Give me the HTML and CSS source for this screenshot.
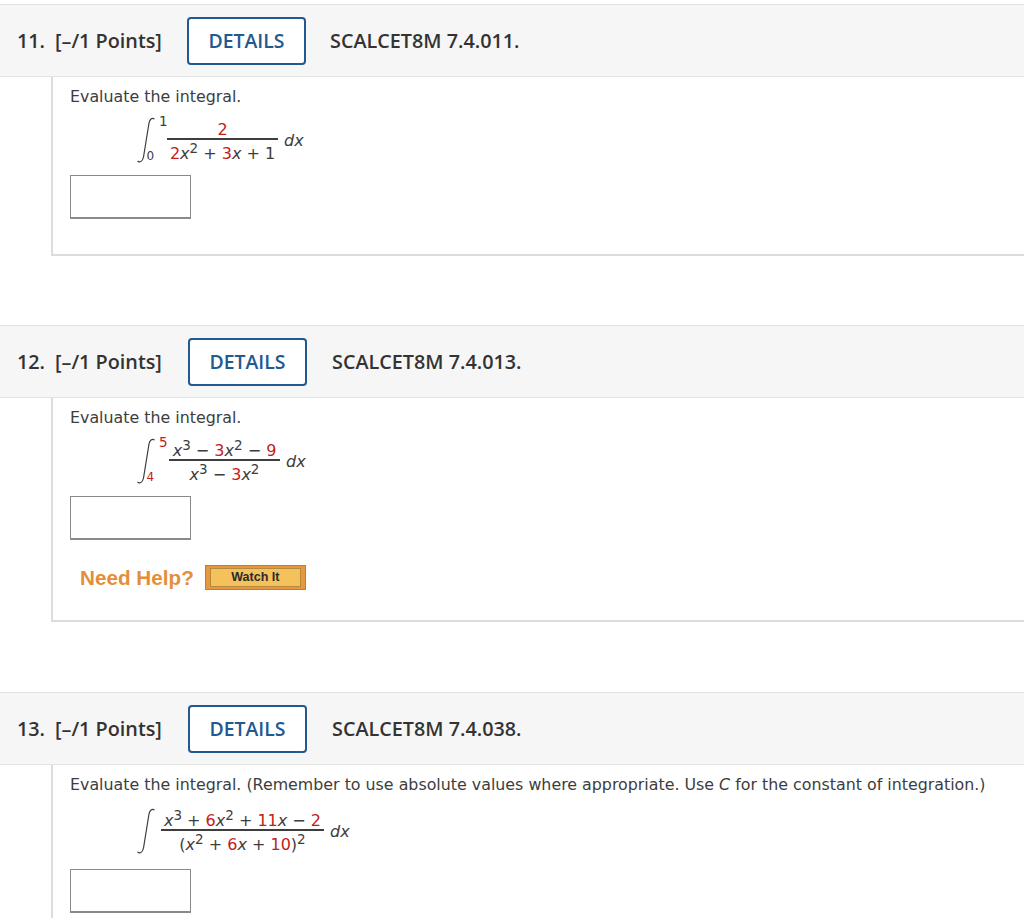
FILE: index.html
```html
<!DOCTYPE html>
<html lang="en">
<head>
  <meta charset="UTF-8" />
  <title>Assignment</title>
  <link rel="stylesheet" href="styles.css">
</head>
<body>

  <!-- Question 11 -->
  <div class="question q11">
    <div class="q-head">
      <span class="q-num">11.</span>
      <span class="q-points">[–/1 Points]</span>
      <button class="details">DETAILS</button>
      <span class="q-code">SCALCET8M 7.4.011.</span>
    </div>
    <div class="q-body">
      <p class="prompt">Evaluate the integral.</p>
      <div class="math">
        <svg class="int" width="18" height="46" viewBox="0 0 18 46"><path d="M.5 44c2 1.500 5 1 6-4L12 6c.7-4 3-5.500 5.500-4" /></svg>
        <div class="limits"><span class="upper">1</span><span>0</span></div>
        <div class="frac">
          <div class="num"><b>2</b></div>
          <div class="den"><b>2</b><i>x</i><sup>2</sup> + <b>3</b><i>x</i> + 1</div>
        </div>
        <i class="dx">dx</i>
      </div>
      <input class="answer" type="text" />
    </div>
  </div>

  <!-- Question 12 -->
  <div class="question q12">
    <div class="q-head">
      <span class="q-num">12.</span>
      <span class="q-points">[–/1 Points]</span>
      <button class="details">DETAILS</button>
      <span class="q-code">SCALCET8M 7.4.013.</span>
    </div>
    <div class="q-body">
      <p class="prompt">Evaluate the integral.</p>
      <div class="math">
        <svg class="int" width="18" height="46" viewBox="0 0 18 46"><path d="M.5 44c2 1.500 5 1 6-4L12 6c.7-4 3-5.500 5.500-4" /></svg>
        <div class="limits red"><span class="upper">5</span><span>4</span></div>
        <div class="frac">
          <div class="num"><i>x</i><sup>3</sup> − <b>3</b><i>x</i><sup>2</sup> − <b>9</b></div>
          <div class="den"><i>x</i><sup>3</sup> − <b>3</b><i>x</i><sup>2</sup></div>
        </div>
        <i class="dx">dx</i>
      </div>
      <input class="answer" type="text" />
      <div class="help">
        <span class="need">Need Help?</span>
        <span class="watch"><span>Watch It</span></span>
      </div>
    </div>
  </div>

  <!-- Question 13 -->
  <div class="question q13">
    <div class="q-head">
      <span class="q-num">13.</span>
      <span class="q-points">[–/1 Points]</span>
      <button class="details">DETAILS</button>
      <span class="q-code">SCALCET8M 7.4.038.</span>
    </div>
    <div class="q-body">
      <p class="prompt">Evaluate the integral. (Remember to use absolute values where appropriate. Use <i>C</i> for the constant of integration.)</p>
      <div class="math">
        <svg class="int" width="18" height="46" viewBox="0 0 18 46"><path d="M.5 44c2 1.500 5 1 6-4L12 6c.7-4 3-5.500 5.500-4" /></svg>
        <div class="limits"></div>
        <div class="frac">
          <div class="num"><i>x</i><sup>3</sup> + <b>6</b><i>x</i><sup>2</sup> + <b>11</b><i>x</i> − <b>2</b></div>
          <div class="den">(<i>x</i><sup>2</sup> + <b>6</b><i>x</i> + <b>10</b>)<sup>2</sup></div>
        </div>
        <i class="dx">dx</i>
      </div>
      <input class="answer" type="text" />
    </div>
  </div>

</body>
</html>
```

FILE: styles.css
```css
* {
  margin: 0; padding: 0; box-sizing: border-box;
}
body {
  background: #fff;
  color: #3d3d3d;
  font-family: "DejaVu Sans", sans-serif;
  font-size: 15.85px;
  padding-top: 4px;
  height: 918px;
  overflow: hidden;
}
.question {
  margin-bottom: 70px;
}
.q11 {
  margin-bottom: 69px;
}
.q-head {
  height: 73px;
  background: #f6f6f6;
  border-top: 1px solid #e2e2e2;
  border-bottom: 1px solid #e2e2e2;
  display: flex;
  align-items: center;
  padding-left: 17px;
  font-family: "Open Sans", sans-serif;
  font-weight: 600;
  font-size: 19.8px;
  color: #333;
}
.q-num {
  width: 38px;
}
.q-points {
  width: 133px;
}
.details {
  width: 119px;
  height: 48px;
  background: #fff;
  border: 2px solid #22598f;
  border-radius: 4px;
  color: #22598f;
  font-family: "Open Sans", sans-serif;
  font-weight: 600;
  font-size: 19.4px;
  margin-right: 25px;
}
.q11 .q-points {
  width: 132px;
}
.q11 .details {
  margin-right: 24px;
}
.q-body {
  margin-left: 51px;
  border-left: 2px solid #dcdcdc;
  border-bottom: 2px solid #dcdcdc;
  padding: 10px 0 0 17px;
}
.q11 .q-body {
  height: 179px;
}
.q12 .q-body {
  height: 224px;
}
.q13 .q-body {
  height: 160px;
}
.prompt {
  line-height: 20px;
  white-space: nowrap;
}
.math {
  display: flex;
  align-items: center;
  height: 46px;
  margin: 10px 0 0 67px;
  font-size: 16px;
}
.q13 .math {
  margin-top: 13px;
}
.int {
  flex: none;
}
.int path {
  fill: none;
  stroke: #3d3d3d;
  stroke-width: 1.2;
}
.limits {
  flex: none;
  align-self: flex-start;
  width: 20.5px;
  height: 51px;
  margin: -4px 0 0 -8.5px;
  font-size: 12px;
  line-height: 16px;
  display: flex;
  flex-direction: column;
  justify-content: space-between;
}
.limits .upper {
  padding-left: 12.5px;
  font-size: 13.5px;
}
.limits.red {
  width: 22.5px;
  color: #c4201a;
}
.q13 .limits {
  width: 14.5px;
}
.frac {
  flex: none;
  width: 111px;
  text-align: center;
  line-height: 22px;
  white-space: nowrap;
}
.q13 .frac {
  width: 163px;
}
.num {
  height: 24px;
  padding-top: 3px;
  border-bottom: 2px solid #3d3d3d;
}
.den {
  height: 24px;
  padding-top: 3px;
}
.frac b {
  font-weight: normal;
  color: #c4201a;
}
.frac sup {
  font-size: 13.5px;
  line-height: 0;
}
.dx {
  margin-left: 6px;
}
.answer {
  display: block;
  width: 121px;
  height: 44px;
  margin-top: 12px;
  background: #fff;
  border: 1px solid #8a8a8a;
  border-bottom-width: 2px;
}
.q13 .answer {
  margin-top: 15px;
}
.help {
  display: flex;
  align-items: center;
  margin: 25px 0 0 10px;
}
.need {
  font-family: "Liberation Sans", sans-serif;
  font-weight: bold;
  font-size: 20.7px;
  color: #e58e3a;
  margin-right: 11px;
}
.watch {
  width: 101px;
  height: 25px;
  padding: 2px 4px;
  background: #e9973f;
  border: 1px solid #b9812f;
  display: flex;
}
.watch span {
  flex: 1;
  background: #f4c15c;
  border: 1px solid #b58a3c;
  text-align: center;
  font-family: "Liberation Sans", sans-serif;
  font-weight: bold;
  font-size: 12.5px;
  line-height: 17px;
  color: #2a2a2a;
}
```
